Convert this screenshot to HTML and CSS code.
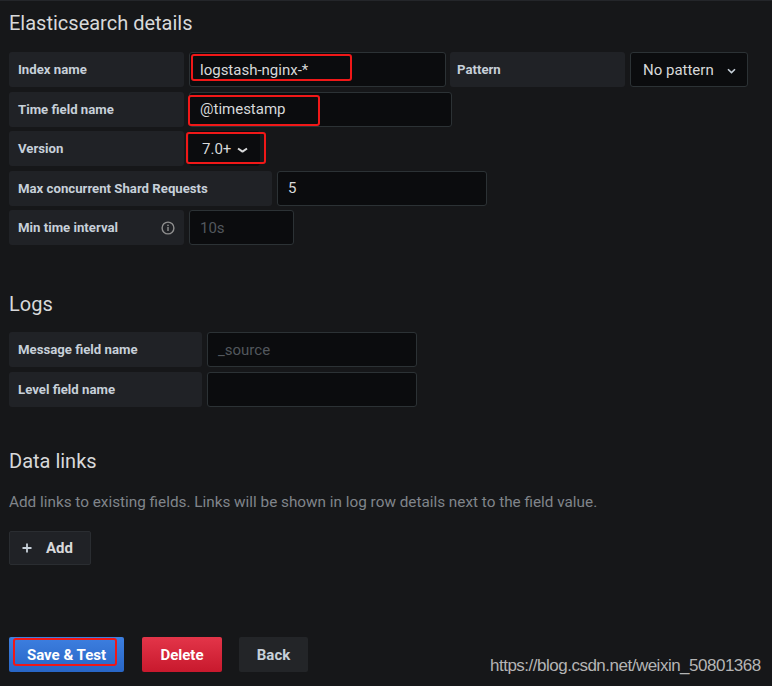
FILE: index.html
```html
<!DOCTYPE html>
<html>
<head>
<meta charset="utf-8">
<link rel="stylesheet" href="styles.css">
</head>
<body>
<div class="page">
  <h3 class="heading h-first">Elasticsearch details</h3>
  <div class="rows">
    <div class="row">
      <div class="label w175">Index name</div>
      <div class="input w257 has-mark"><span class="val">logstash-nginx-*</span><span class="mark m-index"></span></div>
      <div class="label w174 gap-l">Pattern</div>
      <div class="select w118">No pattern
        <svg class="chev" width="9" height="6" viewBox="0 0 9 6"><path d="M1 1.2 L4.5 4.6 L8 1.2" fill="none" stroke="#c7d0d9" stroke-width="1.6"/></svg>
      </div>
    </div>
    <div class="row">
      <div class="label w175">Time field name</div>
      <div class="input w263 has-mark"><span class="val">@timestamp</span><span class="mark m-time"></span></div>
    </div>
    <div class="row">
      <div class="label w175">Version</div>
      <div class="select w70 ver has-mark"><span class="val">7.0+</span>
        <svg class="chev2" width="11" height="6" viewBox="0 0 11 6"><path d="M1 1.5 L5.5 4.6 L10 1.5" fill="none" stroke="#d8d9da" stroke-width="2" stroke-linejoin="round"/></svg>
        <span class="mark m-ver"></span></div>
    </div>
    <div class="row">
      <div class="label w263">Max concurrent Shard Requests</div>
      <div class="input w210"><span class="val">5</span></div>
    </div>
    <div class="row">
      <div class="label w175 info-label">Min time interval
        <svg class="info" width="14" height="14" viewBox="0 0 14 14"><circle cx="7" cy="7" r="5.9" fill="none" stroke="#8e8e8e" stroke-width="1.4"/><rect x="6.3" y="6" width="1.4" height="4" fill="#8e8e8e"/><circle cx="7" cy="4.3" r="0.85" fill="#8e8e8e"/></svg>
      </div>
      <div class="input w105"><span class="ph">10s</span></div>
    </div>
  </div>

  <h3 class="heading h-logs">Logs</h3>
  <div class="rows rows-logs">
    <div class="row">
      <div class="label w192">Message field name</div>
      <div class="input w210"><span class="ph">_source</span></div>
    </div>
    <div class="row">
      <div class="label w192">Level field name</div>
      <div class="input w210"></div>
    </div>
  </div>

  <h3 class="heading h-links">Data links</h3>
  <p class="desc">Add links to existing fields. Links will be shown in log row details next to the field value.</p>
  <div class="add-row">
    <button class="btn btn-add">
      <svg width="10" height="10" viewBox="0 0 10 10"><path d="M5 0.5 V9.5 M0.5 5 H9.5" stroke="#c7d0d9" stroke-width="1.8"/></svg>
      <span>Add</span>
    </button>
  </div>

  <div class="actions">
    <button class="btn btn-save has-mark">Save &amp; Test<span class="mark m-save"></span></button>
    <button class="btn btn-delete">Delete</button>
    <button class="btn btn-back">Back</button>
  </div>
</div>
<div class="watermark">https://blog.csdn.net/weixin_50801368</div>
</body>
</html>
```
FILE: styles.css
```css
* { box-sizing: border-box; }
html, body { margin: 0; padding: 0; }
body {
  background: #161719;
  width: 772px;
  height: 686px;
  overflow: hidden;
  font-family: Roboto, "Liberation Sans", sans-serif;
  color: #d8d9da;
  position: relative;
  border-top: 1px solid #24262a;
}
.page { padding: 0 9px; }
.heading {
  margin: 0;
  font-size: 20px;
  line-height: 24px;
  font-weight: 400;
  color: #d8d9da;
}
.h-first { padding-top: 10px; }
.h-logs { margin-top: 47px; }
.h-links { margin-top: 42px; }
.rows { display: flex; flex-direction: column; gap: 4.5px; margin-top: 17px; }
.rows-logs { margin-top: 16px; gap: 5px; }
.row { display: flex; gap: 5px; height: 35px; }
.label {
  background: #202226;
  border-radius: 3px;
  color: #c7d0d9;
  font-size: 13.2px;
  font-weight: 700;
  display: flex;
  align-items: center;
  padding-left: 9px;
  height: 35px;
}
.gap-l { margin-left: -1px; padding-left: 7px; }
.info-label { justify-content: space-between; padding-right: 9px; }
.info { margin-top: 1px; }
.input, .select {
  background: #0b0c0e;
  border: 1px solid #2c3235;
  border-radius: 3px;
  height: 35px;
  display: flex;
  align-items: center;
  padding-left: 10px;
  font-size: 15px;
  color: #d8d9da;
}
.select { padding-left: 12px; }
.chev { margin-left: 13px; margin-top: 2px; }
.ver { padding-left: 12px; border-color: #0b0c0e; }
.chev2 { margin-left: 6px; margin-top: 3px; }
.ph { color: #52575d; }
.has-mark { position: relative; }
.mark {
  position: absolute;
  border: 2.5px solid #f01818;
  border-radius: 3px;
  pointer-events: none;
}
.m-index { left: 1px; top: 1px; width: 161px; height: 27px; }
.m-time { left: -2px; top: 2px; width: 132px; height: 31px; }
.m-ver { left: -4px; top: 0px; width: 80px; height: 32px; }
.m-save { left: 4px; top: 1px; width: 104px; height: 28px; }
.w70 { width: 71px; }
.w105 { width: 105px; }
.w118 { width: 118px; }
.w174 { width: 175px; }
.w175 { width: 175px; }
.w192 { width: 193px; }
.w210 { width: 210px; }
.w257 { width: 257px; }
.w263 { width: 263px; }
.desc {
  margin: 19px 0 0;
  font-size: 15.3px;
  line-height: 21px;
  color: #80858b;
}
.add-row { margin-top: 18px; }
.btn {
  font-family: Roboto, "Liberation Sans", sans-serif;
  font-size: 15px;
  font-weight: 700;
  height: 34px;
  border-radius: 2px;
  border: none;
  display: inline-flex;
  align-items: center;
  cursor: pointer;
}
.btn-add {
  background: #202226;
  border: 1px solid #2a2d31;
  color: #d8d9da;
  width: 82px;
  padding: 0 0 0 12px;
  gap: 14px;
}
.actions { margin-top: 72px; display: flex; }
.btn-save {
  background: linear-gradient(#3d7fe0, #2866c6);
  color: #fff;
  width: 115px;
  justify-content: center;
  padding: 0;
  height: 35px;
}
.btn-delete {
  margin-left: 18px;
  background: linear-gradient(#e33549, #c8192d);
  color: #fff;
  width: 80px;
  justify-content: center;
  height: 35px;
}
.btn-back {
  margin-left: 17px;
  background: #232528;
  color: #c7d0d9;
  width: 69px;
  justify-content: center;
  height: 35px;
}
.watermark {
  position: absolute;
  left: 490px;
  top: 655px;
  font-family: "Liberation Sans", Arial, sans-serif;
  font-size: 17px;
  line-height: 20px;
  letter-spacing: -0.5px;
  color: #b4b4b4;
  white-space: nowrap;
}
```
